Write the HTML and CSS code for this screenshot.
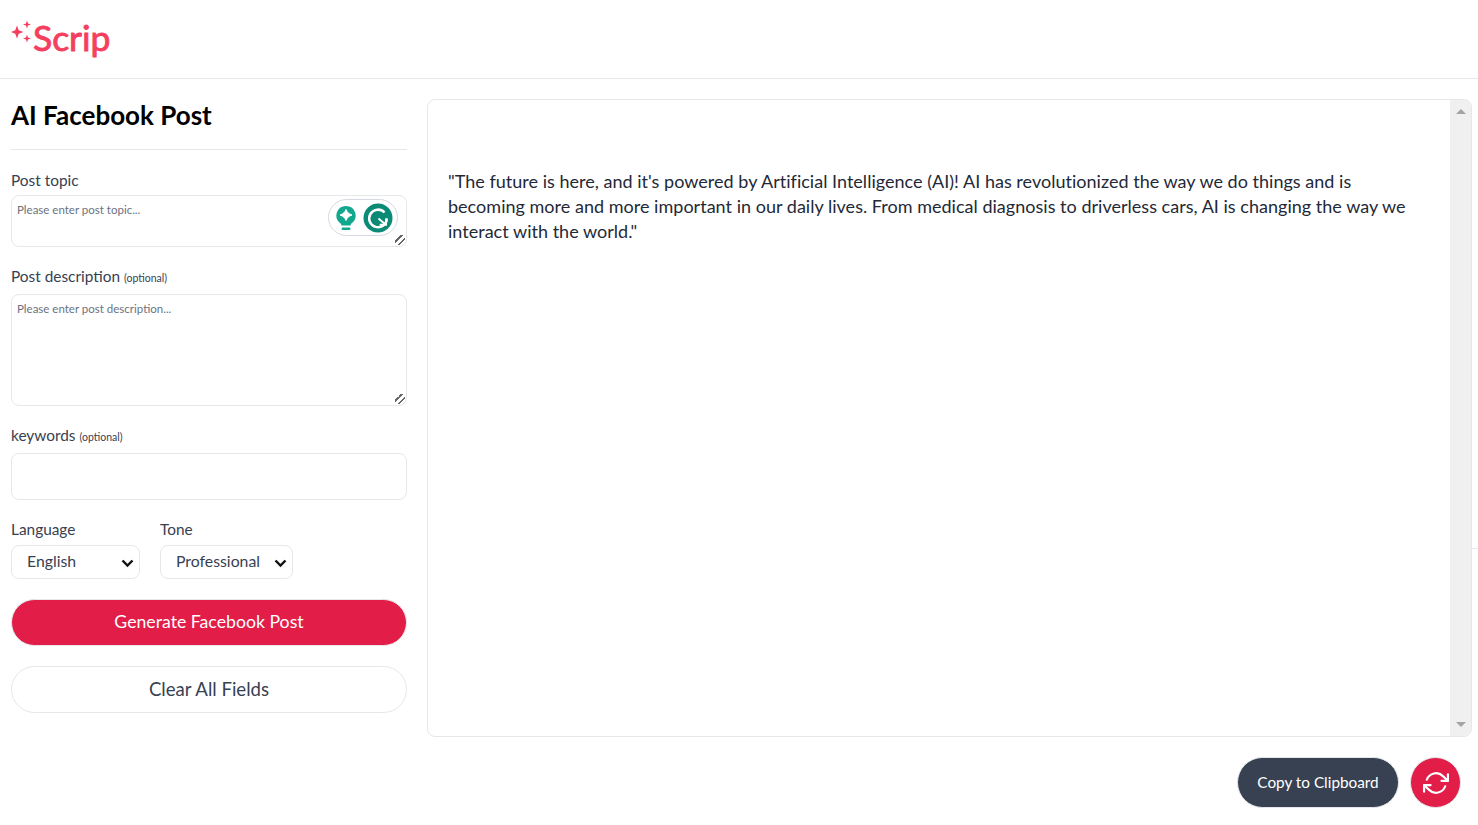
FILE: index.html
```html
<!DOCTYPE html>
<html lang="en">
<head>
<meta charset="utf-8">
<title>AI Facebook Post</title>
<link rel="stylesheet" href="styles.css">
</head>
<body>
<header class="topbar">
  <div class="logo">
    <svg class="sparkles" width="22" height="24" viewBox="0 0 22 24"><path d="M6 5.500 L7.700 10.300 L12.500 12 L7.700 13.700 L6 18.500 L4.300 13.700 L0 12 L4.300 10.300Z M16 .5 L17 3.500 L20 4.500 L17 5.500 L16 8.500 L15 5.500 L12 4.500 L15 3.500Z M16 14.500 L17 17.500 L20 18.500 L17 19.500 L16 22.500 L15 19.500 L12 18.500 L15 17.500Z" fill="#f43f5e"/></svg>
    <span class="logo-text">Scrip</span>
  </div>
</header>
<main class="layout">
  <section class="form-col">
    <h1 class="title">AI Facebook Post</h1>
    <hr class="divider">
    <label class="field-label label-first">Post topic</label>
    <div class="topic-wrap">
      <textarea class="input topic" placeholder="Please enter post topic..."></textarea>
      <div class="gram-badge">
        <svg width="22" height="26" viewBox="0 0 22 26"><path d="M11 1a9.500 9.500 0 0 0-6 16.900c.9.800 1.500 1.600 1.500 2.600h9c0-1 .6-1.800 1.500-2.600A9.500 9.500 0 0 0 11 1z" fill="#12a88f"/><path d="M11 4.500c1 2.700 2.800 4.500 6 5.500-3.200 1-5 2.800-6 5.500-1-2.700-2.800-4.500-6-5.500 3.200-1 5-2.800 6-5.500z" fill="#fff" stroke="#fff" stroke-width="1" stroke-linejoin="round"/><rect x="6.500" y="22.500" width="9" height="2.500" rx="1.200" fill="#12a88f"/></svg>
        <svg width="30" height="30" viewBox="0 0 30 30"><circle cx="15" cy="15" r="14.500" fill="#0b8a75"/><path d="M21.500 9.500A8.800 8.800 0 1 0 23.800 15.500" fill="none" stroke="#fff" stroke-width="2.500"/><path d="M15.500 15.500l7 6M23 15.500v6.300h-6.300" fill="none" stroke="#fff" stroke-width="1.900"/></svg>
      </div>
    </div>
    <label class="field-label label-desc">Post description <small class="opt">(optional)</small></label>
    <textarea class="input desc" placeholder="Please enter post description..."></textarea>
    <label class="field-label label-key">keywords <small class="opt">(optional)</small></label>
    <input class="input keywords" type="text">
    <div class="selects">
      <div class="select-field">
        <label class="field-label">Language</label>
        <div class="select-box lang"><span>English</span><svg class="chev" width="13" height="9" viewBox="0 0 13 9"><path d="M1.500 1.500L6.500 6.500l5-5" fill="none" stroke="#111" stroke-width="2.400"/></svg></div>
      </div>
      <div class="select-field">
        <label class="field-label">Tone</label>
        <div class="select-box tone"><span>Professional</span><svg class="chev" width="13" height="9" viewBox="0 0 13 9"><path d="M1.500 1.500L6.500 6.500l5-5" fill="none" stroke="#111" stroke-width="2.400"/></svg></div>
      </div>
    </div>
    <button class="btn-primary" type="button">Generate Facebook Post</button>
    <button class="btn-outline" type="button">Clear All Fields</button>
  </section>
  <section class="output-col">
    <div class="output-panel">
      <div class="output-text">"The future is here, and it's powered by Artificial Intelligence (AI)! AI has revolutionized the way we do things and is becoming more and more important in our daily lives. From medical diagnosis to driverless cars, AI is changing the way we interact with the world."</div>
      <div class="scrollbar"><span class="arrow-up"></span><span class="arrow-down"></span></div>
    </div>
    <div class="actions">
      <button class="btn-copy" type="button">Copy to Clipboard</button>
      <button class="btn-refresh" type="button" aria-label="Regenerate">
        <svg width="26" height="26" viewBox="0 0 24 24" fill="none" stroke="#fff" stroke-width="2" stroke-linecap="round" stroke-linejoin="round"><path d="M23 4v6h-6"/><path d="M1 20v-6h6"/><path d="M3.510 9a9 9 0 0 1 14.850-3.360L23 10M1 14l4.640 4.360A9 9 0 0 0 20.490 15"/></svg>
      </button>
    </div>
  </section>
  <span class="edge-line"></span>
</main>
</body>
</html>
```
FILE: styles.css
```css
* { box-sizing: border-box; }
html, body { margin: 0; padding: 0; }
body { font-family: "Lato", "Noto Sans", sans-serif; color: #1f2937; background: #fff; width: 1478px; height: 825px; overflow: hidden; }
.topbar { height: 79px; border-bottom: 1px solid #e5e7eb; padding: 15px 0 0 11px; }
.logo { display: flex; align-items: flex-start; }
.sparkles { margin-top: 5px; flex: none; }
.logo-text { font-size: 35.500px; line-height: 45px; color: #f43f5e; font-weight: 400; -webkit-text-stroke: 0.9px #f43f5e; }
.layout { display: flex; align-items: flex-start; }
.form-col { width: 396px; margin-left: 11px; display: flex; flex-direction: column; padding-top: 19px; }
.title { margin: 0; font-size: 26px; line-height: 34px; font-weight: 700; color: #000; }
.divider { width: 100%; height: 1px; margin: 17px 0 0; border: 0; background: #e5e7eb; }
.field-label { display: block; font-size: 15.400px; line-height: 20px; color: #374151; }
.label-first { margin-top: 20px; margin-bottom: 5px; }
.label-desc { margin-top: 19px; margin-bottom: 6px; }
.label-key { margin-top: 19px; margin-bottom: 6px; }
.opt { font-size: 10.500px; }
.input { display: block; width: 100%; border: 1px solid #e5e7eb; border-radius: 8px; padding: 7px 5px; font-family: inherit; font-size: 11.500px; line-height: 14px; color: #374151; background: #fff; outline: none; }
.input::placeholder { color: #6b7280; opacity: 1; }
textarea::-webkit-resizer { background: linear-gradient(135deg, transparent 30%, #666 30%, #666 42%, transparent 42%, transparent 62%, #666 62%, #666 74%, transparent 74%) right 1px bottom 1px / 10px 10px no-repeat; }
.topic-wrap { position: relative; height: 52px; }
.topic { height: 52px; }
.desc { height: 112px; }
.keywords { height: 47px; }
.gram-badge { position: absolute; top: 4px; right: 9px; width: 70px; height: 37px; border: 1px solid #d5d9e3; border-radius: 19px; background: #fff; display: flex; align-items: center; justify-content: flex-end; gap: 6px; padding-right: 4px; }
.selects { display: flex; gap: 20px; margin-top: 19px; }
.select-box { margin-top: 6px; height: 34px; border: 1px solid #e5e7eb; border-radius: 8px; display: flex; align-items: center; justify-content: space-between; padding: 0 5px 4px 15px; font-size: 15.800px; color: #374151; }
.lang { width: 129px; }
.tone { width: 133px; }
.chev { margin-top: 6px; }
.btn-primary, .btn-outline { display: block; width: 100%; border-radius: 24px; font-family: inherit; cursor: pointer; }
.btn-primary { height: 47px; margin-top: 20px; background: #e11d48; color: #fff; border: 1px solid #e5e7eb; font-size: 17.700px; padding-bottom: 3px; }
.btn-outline { height: 47px; margin-top: 20px; background: #fff; color: #374151; border: 1px solid #e5e7eb; font-size: 18.600px; padding-bottom: 3px; }
.output-col { width: 1045px; margin-left: 20px; padding-top: 20px; }
.output-panel { height: 638px; border: 1px solid #e5e7eb; border-radius: 8px; display: flex; overflow: hidden; }
.output-text { flex: 1; padding: 69px 22px 0 20px; font-size: 18px; line-height: 25px; letter-spacing: 0.02px; color: #1f2937; }
.scrollbar { width: 21px; flex: none; background: #f0f0f0; display: flex; flex-direction: column; justify-content: space-between; align-items: center; padding: 9px 0; }
.arrow-up { border: 5px solid transparent; border-top: 0; border-bottom: 5px solid #a3a3a3; }
.arrow-down { border: 5px solid transparent; border-bottom: 0; border-top: 5px solid #a3a3a3; }
.actions { display: flex; justify-content: flex-end; align-items: center; gap: 11px; margin-top: 20px; padding-right: 11px; }
.btn-copy { width: 162px; height: 51px; border-radius: 26px; background: #374151; color: #fff; border: 1px solid #e5e7eb; font-family: inherit; font-size: 15.300px; padding: 0 0 2px; }
.btn-refresh { width: 51px; height: 51px; border-radius: 50%; background: #e11d48; border: 1px solid #e5e7eb; display: flex; align-items: center; justify-content: center; padding: 0; }
.edge-line { position: absolute; left: 1472px; top: 548px; width: 6px; height: 1px; background: #e5e7eb; }
```
